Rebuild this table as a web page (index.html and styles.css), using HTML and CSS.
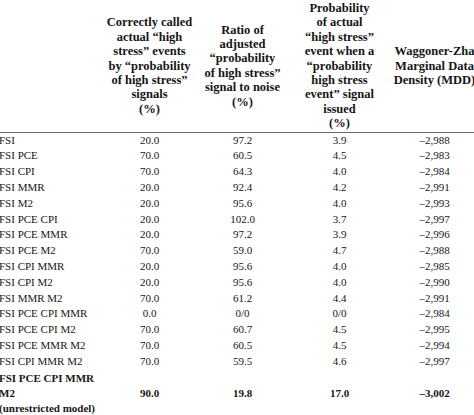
FILE: index.html
```html
<!DOCTYPE html>
<html>
<head>
<meta charset="utf-8">
<link rel="stylesheet" href="styles.css">
</head>
<body>
<table class="tbl">
  <colgroup>
    <col class="c0"><col class="c1"><col class="c2"><col class="c3"><col class="c4">
  </colgroup>
  <thead>
    <tr>
      <th class="hd"></th>
      <th class="hd">Correctly called<br>actual “high<br>stress” events<br>by “probability<br>of high stress”<br>signals<br>(%)</th>
      <th class="hd">Ratio of<br>adjusted<br>“probability<br>of high stress”<br>signal to noise<br>(%)</th>
      <th class="hd">Probability<br>of actual<br>“high stress”<br>event when a<br>“probability<br>high stress<br>event” signal<br>issued<br>(%)</th>
      <th class="hd">Waggoner-Zha<br>Marginal Data<br>Density (MDD)</th>
    </tr>
  </thead>
  <tbody>
    <tr><td class="lab">FSI</td><td>20.0</td><td>97.2</td><td>3.9</td><td>–2,988</td></tr>
    <tr><td class="lab">FSI PCE</td><td>70.0</td><td>60.5</td><td>4.5</td><td>–2,983</td></tr>
    <tr><td class="lab">FSI CPI</td><td>70.0</td><td>64.3</td><td>4.0</td><td>–2,984</td></tr>
    <tr><td class="lab">FSI MMR</td><td>20.0</td><td>92.4</td><td>4.2</td><td>–2,991</td></tr>
    <tr><td class="lab">FSI M2</td><td>20.0</td><td>95.6</td><td>4.0</td><td>–2,993</td></tr>
    <tr><td class="lab">FSI PCE CPI</td><td>20.0</td><td>102.0</td><td>3.7</td><td>–2,997</td></tr>
    <tr><td class="lab">FSI PCE MMR</td><td>20.0</td><td>97.2</td><td>3.9</td><td>–2,996</td></tr>
    <tr><td class="lab">FSI PCE M2</td><td>70.0</td><td>59.0</td><td>4.7</td><td>–2,988</td></tr>
    <tr><td class="lab">FSI CPI MMR</td><td>20.0</td><td>95.6</td><td>4.0</td><td>–2,985</td></tr>
    <tr><td class="lab">FSI CPI M2</td><td>20.0</td><td>95.6</td><td>4.0</td><td>–2,990</td></tr>
    <tr><td class="lab">FSI MMR M2</td><td>70.0</td><td>61.2</td><td>4.4</td><td>–2,991</td></tr>
    <tr><td class="lab">FSI PCE CPI MMR</td><td>0.0</td><td>0/0</td><td>0/0</td><td>–2,984</td></tr>
    <tr><td class="lab">FSI PCE CPI M2</td><td>70.0</td><td>60.7</td><td>4.5</td><td>–2,995</td></tr>
    <tr><td class="lab">FSI PCE MMR M2</td><td>70.0</td><td>60.5</td><td>4.5</td><td>–2,994</td></tr>
    <tr><td class="lab">FSI CPI MMR M2</td><td>70.0</td><td>59.5</td><td>4.6</td><td>–2,997</td></tr>
    <tr class="best"><td class="lab">FSI PCE CPI MMR<br>M2<br>(unrestricted model)</td><td>90.0</td><td>19.8</td><td>17.0</td><td>–3,002</td></tr>
  </tbody>
</table>
</body>
</html>
```
FILE: styles.css
```css
html, body {
  margin: 0;
  padding: 0;
  background: #ffffff;
  overflow: hidden;
}
body {
  width: 474px;
  height: 415px;
  font-family: "Liberation Serif", "Times New Roman", serif;
  color: #161616;
}
.tbl {
  border-collapse: collapse;
  table-layout: fixed;
  width: 480px;
  margin-left: -1px;
}
.c0 { width: 104px; }
.c1 { width: 93px; }
.c2 { width: 93px; }
.c3 { width: 101px; }
.c4 { width: 89px; }
.hd {
  font-weight: bold;
  font-size: 12.5px;
  line-height: 14.4px;
  text-align: center;
  vertical-align: middle;
  white-space: nowrap;
  padding: 1px 0 1px 0;
  border-bottom: 1.5px solid #6a6a6a;
}
td {
  font-size: 11px;
  line-height: 15.8px;
  text-align: center;
  vertical-align: middle;
  white-space: nowrap;
  padding: 0;
}
td.lab {
  text-align: left;
}
.best td {
  font-weight: bold;
  line-height: 15px;
  padding-top: 1px;
}
```
